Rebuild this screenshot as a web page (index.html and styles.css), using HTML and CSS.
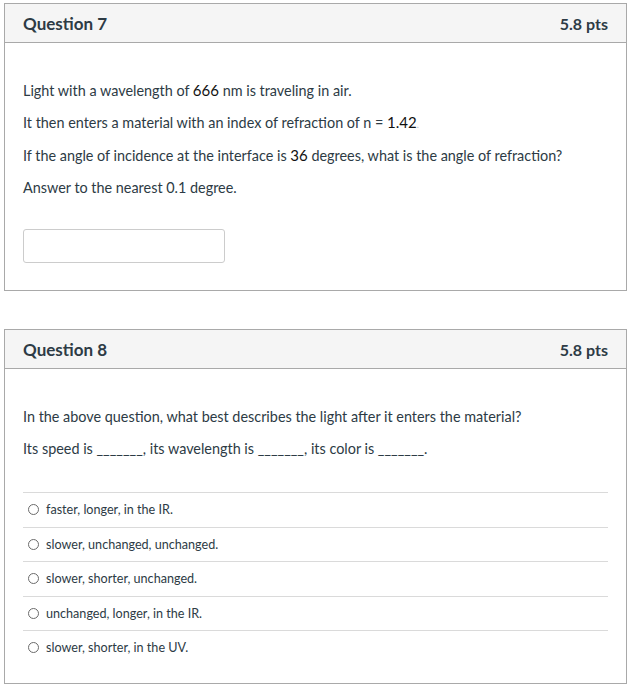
FILE: index.html
```html
<!DOCTYPE html>
<html>
<head>
<meta charset="utf-8">
<link rel="stylesheet" href="styles.css">
</head>
<body>
<div class="page">
  <div class="question">
    <div class="q-header">
      <span class="q-name">Question 7</span>
      <span class="q-pts">5.8 pts</span>
    </div>
    <div class="q-body">
      <p>Light with a wavelength of <span class="num">666</span> nm is traveling in air.</p>
      <p>It then enters a material with an index of refraction of n = <span class="num">1.42</span><span class="dot">.</span></p>
      <p>If the angle of incidence at the interface is <span class="num">36</span> degrees, what is the angle of refraction?</p>
      <p>Answer to the nearest 0.1 degree.</p>
      <div class="answer-input"></div>
    </div>
  </div>

  <div class="question q8">
    <div class="q-header">
      <span class="q-name">Question 8</span>
      <span class="q-pts">5.8 pts</span>
    </div>
    <div class="q-body mc">
      <p>In the above question, what best describes the light after it enters the material?</p>
      <p>Its speed is _______, its wavelength is _______, its color is _______.</p>
      <div class="options">
        <div class="option"><span class="radio"></span><span class="opt-text">faster, longer, in the IR.</span></div>
        <div class="option"><span class="radio"></span><span class="opt-text">slower, unchanged, unchanged.</span></div>
        <div class="option"><span class="radio"></span><span class="opt-text">slower, shorter, unchanged.</span></div>
        <div class="option"><span class="radio"></span><span class="opt-text">unchanged, longer, in the IR.</span></div>
        <div class="option"><span class="radio"></span><span class="opt-text">slower, shorter, in the UV.</span></div>
      </div>
    </div>
  </div>
</div>
</body>
</html>
```
FILE: styles.css
```css
html, body {
  margin: 0;
  padding: 0;
  background: #ffffff;
}
body {
  font-family: Lato, "Open Sans", "Liberation Sans", sans-serif;
  color: #2d3b45;
}
.page {
  padding: 3px 0 0 4px;
}
.question {
  width: 623px;
  box-sizing: border-box;
  border: 1px solid #a9a9a9;
  background: #fff;
}
.q8 {
  margin-top: 38px;
}
.q-header {
  height: 39px;
  box-sizing: border-box;
  background: #f5f5f5;
  border-bottom: 1px solid #a9a9a9;
  display: flex;
  align-items: center;
  justify-content: space-between;
  padding: 0 18px;
  font-weight: bold;
  font-size: 17px;
  color: #2d3b45;
}
.q-pts {
  font-size: 16px;
}
.q-body {
  padding: 26px 18px 27px 18px;
  font-size: 14.4px;
}
.q-body p {
  margin: 12px 0;
  line-height: 19.5px;
}
.num {
  color: #111;
  font-size: 15px;
}
.dot {
  color: #bbb;
  font-size: 9px;
}
.answer-input {
  margin-top: 32px;
  width: 202px;
  height: 34px;
  box-sizing: border-box;
  border: 1px solid #cccccc;
  border-radius: 3px;
}
.mc {
  padding-bottom: 18px;
}
.options {
  margin-top: 34px;
}
.option {
  border-top: 1px solid #dadada;
  padding: 8px 0 8px 5px;
  line-height: 17.5px;
  display: flex;
  align-items: center;
  font-size: 12.6px;
}
.radio {
  width: 11px;
  height: 11px;
  box-sizing: border-box;
  border: 1px solid #6b6b6b;
  border-radius: 50%;
  margin-right: 7px;
  flex: none;
}
```
